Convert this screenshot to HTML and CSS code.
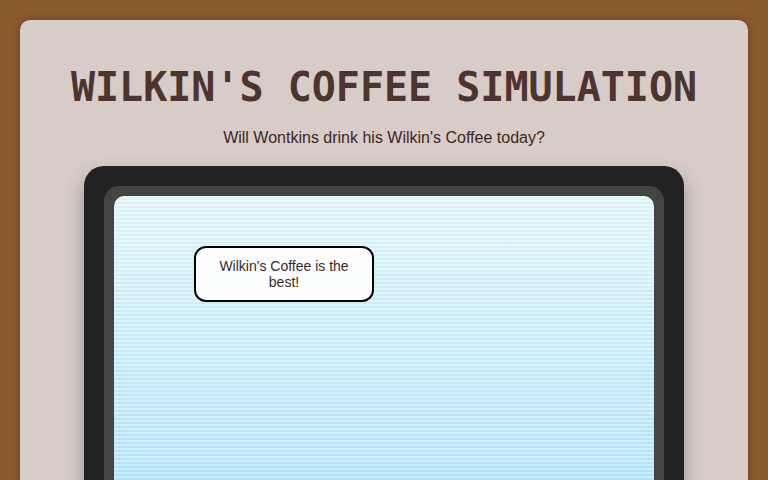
FILE: index.html
```html
<!DOCTYPE html>
<html lang="en">
<head>
<meta charset="utf-8">
<title>Wilkin's Coffee Simulation</title>
<link rel="stylesheet" href="styles.css">
</head>
<body>
  <main class="page">
    <h1 class="title">WILKIN'S COFFEE SIMULATION</h1>
    <p class="subtitle">Will Wontkins drink his Wilkin's Coffee today?</p>
    <div class="monitor">
      <div class="bezel">
        <div class="screen">
          <div class="bubble">Wilkin's Coffee is the best!</div>
        </div>
      </div>
    </div>
  </main>
</body>
</html>
```
FILE: styles.css
```css
html, body {
  margin: 0;
  height: 100%;
  overflow: hidden;
}

body {
  background: #8b5a2b;
  padding: 20px;
  box-sizing: border-box;
  font-family: "Liberation Sans", Arial, sans-serif;
  color: #4e342e;
}

.page {
  background: #d7ccc8;
  border-radius: 10px;
  padding: 43px 20px 40px;
  min-height: 600px;
  box-shadow: 0 0 10px rgba(0, 0, 0, 0.25);
}

.title {
  margin: 0;
  font-family: "DejaVu Sans Mono", monospace;
  font-weight: bold;
  font-size: 40px;
  line-height: 48px;
  text-align: center;
  white-space: nowrap;
  color: #4e342e;
}

.subtitle {
  margin: 17px 0 18px;
  font-size: 16px;
  line-height: 20px;
  text-align: center;
  color: #3e2723;
}

.monitor {
  width: 600px;
  box-sizing: border-box;
  margin: 0 auto;
  background: #222;
  border-radius: 20px;
  padding: 20px;
  box-shadow: 0 10px 20px rgba(0, 0, 0, 0.3);
}

.bezel {
  background: #444;
  border-radius: 15px;
  padding: 10px;
}

.screen {
  position: relative;
  height: 300px;
  border-radius: 10px;
  overflow: hidden;
  background:
    repeating-linear-gradient(180deg, rgba(255, 255, 255, 0.28) 0 2px, rgba(0, 0, 0, 0.015) 2px 4px),
    linear-gradient(180deg, #e0f7fa 0%, #b3e5fc 100%);
}

.bubble {
  position: absolute;
  left: 80px;
  top: 50px;
  width: 180px;
  box-sizing: border-box;
  padding: 10px 20px;
  background: rgba(255, 255, 255, 0.92);
  border: 2px solid #000;
  border-radius: 12px;
  font-size: 14px;
  line-height: 16px;
  text-align: center;
  color: #3e2723;
}
```
